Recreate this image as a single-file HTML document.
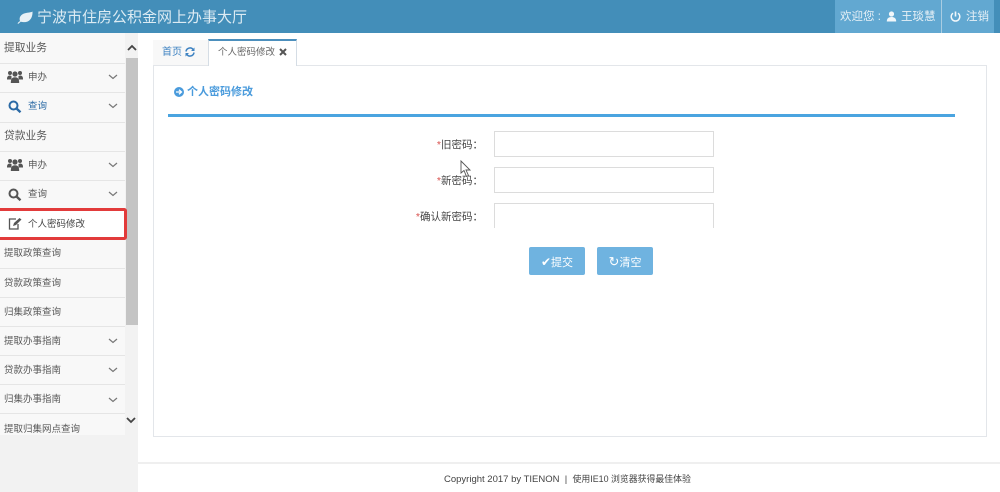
<!DOCTYPE html>
<html lang="zh">
<head>
<meta charset="utf-8">
<title>宁波市住房公积金网上办事大厅</title>
<style>
html,body{margin:0;padding:0;width:1000px;height:492px;overflow:hidden;background:#fff}
body{font-family:"Liberation Sans","Noto Sans CJK SC",sans-serif;color:#555}
#w{position:relative;width:1000px;height:492px;overflow:hidden;background:#fff;filter:blur(0.35px)}
.a{position:absolute;white-space:nowrap}
#hd{left:0;top:0;width:1000px;height:33px;background:#438eb9}
#sb{left:0;top:33px;width:138px;height:459px;background:#f2f2f2}
.r{position:absolute;left:0;width:125px;background:#f8f8f8;border-bottom:1px solid #e5e5e5;box-sizing:border-box}
.t{position:absolute;font-size:9.500px;line-height:14px;color:#585858;white-space:nowrap}
.h{font-size:10.750px}
svg{position:absolute;overflow:visible}
.lb{position:absolute;right:517px;font-size:10.500px;line-height:14px;color:#444;white-space:nowrap}
.lb b{color:#d9534f;font-weight:normal}
.in{position:absolute;left:494px;width:220px;box-sizing:border-box;border:1px solid #dcdcdc;background:#fff}
.btn{position:absolute;top:247px;width:56px;height:28px;background:#6fb3e0;border-radius:2px;color:#fff;font-size:11px;line-height:30px;text-align:center}
</style>
</head>
<body>
<div id="w">
<div class="a" id="hd"></div>
<svg style="left:17px;top:11px" width="16" height="13" viewBox="0 0 16 13"><path d="M0.500 12.500C1 11.500 2 10.800 3 10C1.500 6 4.500 3 8 2.200C11 1.500 14 1.500 15.500 0.500C15.800 5 14 10 9 11C6.800 11.400 5 11 3.800 10.600L1.500 12.800Z" fill="#e8f1f6"/></svg>
<div class="a" style="left:37px;top:9px;font-size:15px;line-height:18px;color:#dcebf3">宁波市住房公积金网上办事大厅</div>
<div class="a" style="left:835px;top:0;width:106px;height:33px;background:#62a8d1"></div>
<div class="a" style="left:941px;top:0;width:1px;height:33px;background:#a9cde2"></div>
<div class="a" style="left:942px;top:0;width:52px;height:33px;background:#62a8d1"></div>
<div class="a" style="left:840px;top:10px;font-size:11.500px;line-height:15px;color:#e6f0f6">欢迎您 :</div>
<svg style="left:886px;top:11px" width="11" height="11" viewBox="0 0 11 11"><circle cx="5.500" cy="3" r="2.600" fill="#f2f7fa"/><path d="M0.800 10.500C0.800 7 3 6 5.500 6C8 6 10.200 7 10.200 10.500Z" fill="#f2f7fa"/></svg>
<div class="a" style="left:901px;top:10px;font-size:11.500px;line-height:15px;color:#e6f0f6">王琰慧</div>
<svg style="left:950px;top:11px" width="11" height="11" viewBox="0 0 11 11"><path d="M5.500 0.500V5.500" stroke="#f2f7fa" stroke-width="1.600" fill="none"/><path d="M3 2.200A4.300 4.300 0 1 0 8 2.200" stroke="#f2f7fa" stroke-width="1.500" fill="none"/></svg>
<div class="a" style="left:966px;top:10px;font-size:11.500px;line-height:15px;color:#e6f0f6">注销</div>

<div class="a" id="sb"></div>
<div class="r" style="top:33px;height:31px"></div>
<div class="r" style="top:64px;height:29px"></div>
<div class="r" style="top:93px;height:30px"></div>
<div class="r" style="top:123px;height:29px"></div>
<div class="r" style="top:152px;height:29px"></div>
<div class="r" style="top:181px;height:29px"></div>
<div class="r" style="top:240px;height:29px"></div>
<div class="r" style="top:269px;height:29px"></div>
<div class="r" style="top:298px;height:29px"></div>
<div class="r" style="top:327px;height:29px"></div>
<div class="r" style="top:356px;height:29px"></div>
<div class="r" style="top:385px;height:29px"></div>
<div class="r" style="top:414px;height:21px;border:0"></div>
<div class="t h" style="left:4px;top:41px">提取业务</div>
<div class="t" style="left:28px;top:71px">申办</div>
<div class="t" style="left:28px;top:100px;color:#2b6aa5">查询</div>
<div class="t h" style="left:4px;top:129px">贷款业务</div>
<div class="t" style="left:28px;top:159px">申办</div>
<div class="t" style="left:28px;top:188px">查询</div>
<div class="t" style="left:4px;top:247px">提取政策查询</div>
<div class="t" style="left:4px;top:277px">贷款政策查询</div>
<div class="t" style="left:4px;top:306px">归集政策查询</div>
<div class="t" style="left:4px;top:335px">提取办事指南</div>
<div class="t" style="left:4px;top:364px">贷款办事指南</div>
<div class="t" style="left:4px;top:393px">归集办事指南</div>
<div class="t" style="left:4px;top:423px">提取归集网点查询</div>

<svg style="left:7px;top:70px" width="16" height="14" viewBox="0 0 16 14"><g fill="#555"><circle cx="3" cy="3" r="2"/><circle cx="13" cy="3" r="2"/><circle cx="8" cy="4" r="2.600"/><path d="M0 9C0 6 1.500 5.500 3 5.500L4.500 6V9.500H0Z"/><path d="M16 9C16 6 14.500 5.500 13 5.500L11.500 6V9.500H16Z"/><path d="M3.800 13C3.800 8.500 5.500 7.200 8 7.200C10.500 7.200 12.200 8.500 12.200 13Z"/></g></svg>
<svg style="left:7px;top:158px" width="16" height="14" viewBox="0 0 16 14"><g fill="#555"><circle cx="3" cy="3" r="2"/><circle cx="13" cy="3" r="2"/><circle cx="8" cy="4" r="2.600"/><path d="M0 9C0 6 1.500 5.500 3 5.500L4.500 6V9.500H0Z"/><path d="M16 9C16 6 14.500 5.500 13 5.500L11.500 6V9.500H16Z"/><path d="M3.800 13C3.800 8.500 5.500 7.200 8 7.200C10.500 7.200 12.200 8.500 12.200 13Z"/></g></svg>
<svg style="left:8px;top:100px" width="14" height="13" viewBox="0 0 14 13"><circle cx="5.500" cy="5.500" r="4" fill="none" stroke="#2b6aa5" stroke-width="2"/><path d="M8.500 8.500L12.500 12.200" stroke="#2b6aa5" stroke-width="2.400"/></svg>
<svg style="left:8px;top:188px" width="14" height="13" viewBox="0 0 14 13"><circle cx="5.500" cy="5.500" r="4" fill="none" stroke="#555" stroke-width="2"/><path d="M8.500 8.500L12.500 12.200" stroke="#555" stroke-width="2.400"/></svg>
<svg style="left:108px;top:74px" width="10" height="6"><path d="M1 1L5 4.500L9 1" fill="none" stroke="#777" stroke-width="1.200"/></svg>
<svg style="left:108px;top:103px" width="10" height="6"><path d="M1 1L5 4.500L9 1" fill="none" stroke="#777" stroke-width="1.200"/></svg>
<svg style="left:108px;top:162px" width="10" height="6"><path d="M1 1L5 4.500L9 1" fill="none" stroke="#777" stroke-width="1.200"/></svg>
<svg style="left:108px;top:191px" width="10" height="6"><path d="M1 1L5 4.500L9 1" fill="none" stroke="#777" stroke-width="1.200"/></svg>
<svg style="left:108px;top:338px" width="10" height="6"><path d="M1 1L5 4.500L9 1" fill="none" stroke="#777" stroke-width="1.200"/></svg>
<svg style="left:108px;top:367px" width="10" height="6"><path d="M1 1L5 4.500L9 1" fill="none" stroke="#777" stroke-width="1.200"/></svg>
<svg style="left:108px;top:397px" width="10" height="6"><path d="M1 1L5 4.500L9 1" fill="none" stroke="#777" stroke-width="1.200"/></svg>

<div class="a" style="left:126px;top:58px;width:12px;height:267px;background:#c4c4c4"></div>
<svg style="left:126px;top:44px" width="12" height="8"><path d="M2 6L6 2L10 6" fill="none" stroke="#444" stroke-width="1.800"/></svg>
<svg style="left:125px;top:416px" width="12" height="8"><path d="M2 2L6 6L10 2" fill="none" stroke="#444" stroke-width="1.800"/></svg>

<div class="a" style="left:0;top:208px;width:127px;height:32px;box-sizing:border-box;border:3px solid #e23b3b;border-left:0;border-radius:0 3px 3px 0;background:#fff"></div>
<svg style="left:8px;top:217px" width="15" height="13" viewBox="0 0 15 13"><path d="M8 2H1.500V12H10V7" fill="none" stroke="#555" stroke-width="1.300"/><path d="M5 9L6 6L11.500 1L13.500 2.500L8 8Z" fill="#555"/></svg>
<div class="t" style="left:28px;top:218px;color:#444">个人密码修改</div>

<div class="a" style="left:153px;top:40px;width:55px;height:26px;background:#f8f8f8"></div>
<div class="a" style="left:162px;top:46px;font-size:10px;line-height:14px;color:#3f83c2">首页</div>
<svg style="left:185px;top:47px" width="10" height="10" viewBox="0 0 10 10"><path d="M1 4.500A4 4 0 0 1 8.200 2.600M9 5.500A4 4 0 0 1 1.800 7.400" fill="none" stroke="#3f83c2" stroke-width="1.500"/><path d="M9.500 0.500V4H6ZM0.500 9.500V6H4Z" fill="#3f83c2"/></svg>
<div class="a" style="left:153px;top:65px;width:834px;height:372px;box-sizing:border-box;border:1px solid #e3e6ea;background:#fff"></div>
<div class="a" style="left:208px;top:39px;width:89px;height:27px;box-sizing:border-box;background:#fff;border:1px solid #d5dde5;border-top:2px solid #4c8fbd;border-bottom:0"></div>
<div class="a" style="left:218px;top:46px;font-size:9.500px;line-height:14px;color:#666">个人密码修改</div>
<svg style="left:279px;top:48px" width="8" height="8"><path d="M1 1L7 7M7 1L1 7" stroke="#555" stroke-width="2"/></svg>

<svg style="left:174px;top:87px" width="10" height="10" viewBox="0 0 10 10"><circle cx="5" cy="5" r="5" fill="#4a9bdc"/><path d="M2 5H7M5 2.800L7.500 5L5 7.200" fill="none" stroke="#fff" stroke-width="1.300"/></svg>
<div class="a" style="left:187px;top:85px;font-size:11px;line-height:14px;font-weight:bold;color:#4a9bdc">个人密码修改</div>
<div class="a" style="left:168px;top:114px;width:787px;height:3px;background:#4aa4e0"></div>

<div class="lb" style="top:138px"><b>*</b>旧密码：</div>
<div class="lb" style="top:174px"><b>*</b>新密码：</div>
<div class="lb" style="top:210px"><b>*</b>确认新密码：</div>
<div class="in" style="top:131px;height:26px"></div>
<div class="in" style="top:167px;height:26px"></div>
<div class="in" style="top:203px;height:25px;border-bottom:0"></div>
<svg style="left:460px;top:160px" width="12" height="18" viewBox="0 0 12 18"><path d="M1 1V13L4 10.500L6.500 16.500L8.500 15.500L6 10H10Z" fill="#fff" stroke="#555" stroke-width="0.900"/></svg>

<div class="btn" style="left:529px"><span style="font-size:12px">✔</span>提交</div>
<div class="btn" style="left:597px"><span style="font-size:13px">↻</span>清空</div>

<div class="a" style="left:138px;top:462px;width:862px;height:2px;background:#efefef"></div>
<div class="a" style="left:444px;top:472px;font-size:9.500px;line-height:14px;color:#444">Copyright 2017 by TIENON &nbsp;|&nbsp; <span style="font-size:8.900px">使用IE10 浏览器获得最佳体验</span></div>
</div>
</body>
</html>
